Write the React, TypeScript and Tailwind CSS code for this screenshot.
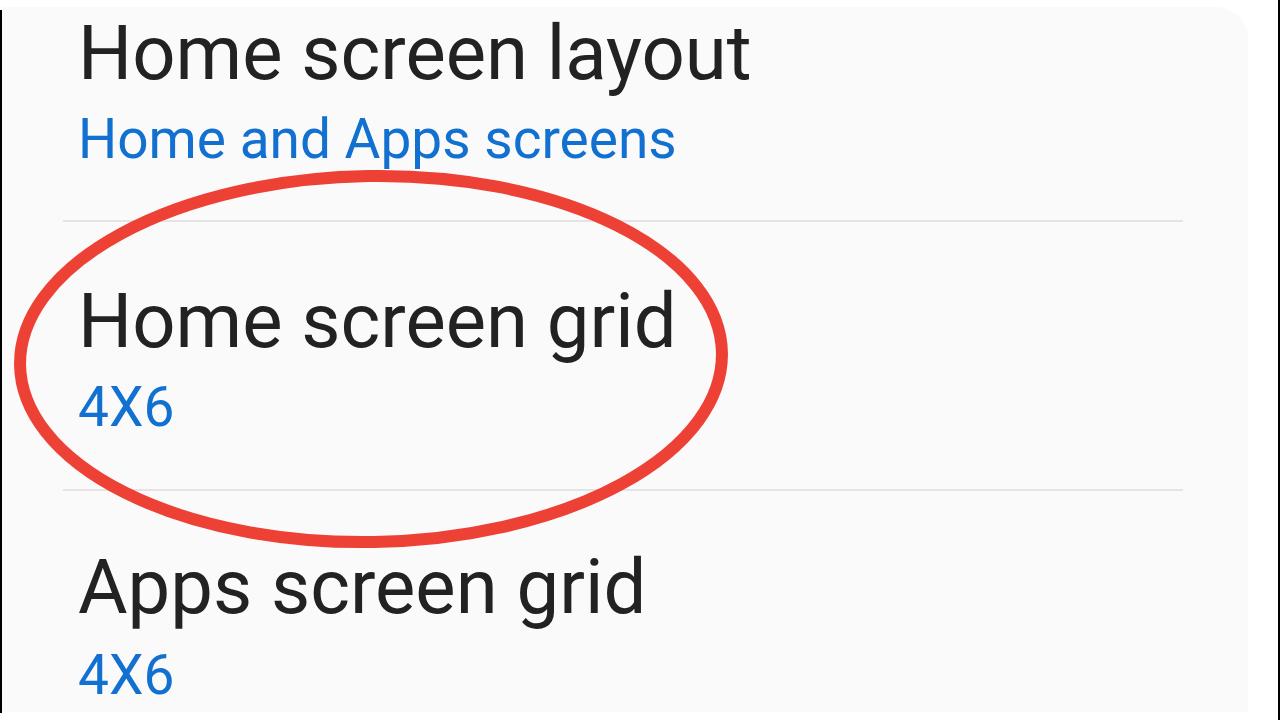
import React from "react";

const font = { fontFamily: "Roboto, 'Noto Sans', sans-serif" };

export default function App() {
  return (
    <div className="relative w-[1280px] h-[720px] bg-white overflow-hidden" style={font}>
      <div className="flex h-full">
        <div className="w-[2px] h-full flex flex-col">
          <div className="h-[10px] bg-white" />
          <div className="h-[703px] bg-black" />
        </div>
        <div className="flex flex-col w-[1246px]">
          <div className="h-[7px]" />
          <div className="h-[705px] bg-[#fafafa] rounded-tr-[32px] flex flex-col">
            <div className="pl-[76px] pt-[8px] flex flex-col">
              <div className="text-[76px] leading-[76px] text-[#222222]">Home screen layout</div>
              <div className="mt-[21px] text-[55px] leading-[55px] text-[#1270d0]">Home and Apps screens</div>
            </div>
            <div className="mt-[53px] ml-[61px] w-[1120px] h-[2px] bg-[#e4e4e4]" />
            <div className="pl-[76px] pt-[61px] flex flex-col">
              <div className="text-[76px] leading-[76px] text-[#222222]">Home screen grid</div>
              <div className="mt-[21px] text-[55px] leading-[55px] text-[#1270d0]">4X6</div>
            </div>
            <div className="mt-[54px] ml-[61px] w-[1120px] h-[2px] bg-[#e4e4e4]" />
            <div className="pl-[76px] pt-[58px] flex flex-col">
              <div className="text-[76px] leading-[76px] text-[#222222]">Apps screen grid</div>
              <div className="mt-[23px] text-[55px] leading-[55px] text-[#1270d0]">4X6</div>
            </div>
          </div>
        </div>
        <div className="w-[30px]" />
        <div className="w-[2px] h-full bg-black" />
      </div>
      <svg className="absolute left-0 top-0 pointer-events-none" width="1280" height="720">
        <ellipse cx="371" cy="359" rx="351" ry="183" fill="none" stroke="#ee4136" strokeWidth="12" transform="rotate(-1 371 359)" />
      </svg>
    </div>
  );
}
